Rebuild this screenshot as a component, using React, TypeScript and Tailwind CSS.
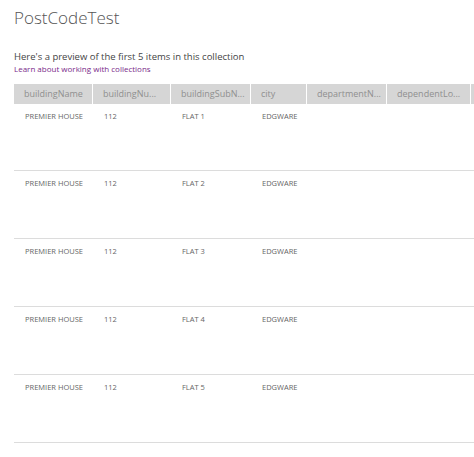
const columns = [
  { label: 'buildingName', width: 'w-[79px]' },
  { label: 'buildingNu...', width: 'w-[78px]' },
  { label: 'buildingSubN...', width: 'w-[80px]' },
  { label: 'city', width: 'w-[56px]' },
  { label: 'departmentN...', width: 'w-[80px]' },
  { label: 'dependentLo...', width: 'w-[84px]' },
  { label: '', width: 'w-[40px]' },
]

const rows = [1, 2, 3, 4, 5].map((n) => ['PREMIER HOUSE', '112', `FLAT ${n}`, 'EDGWARE', '', '', ''])

export default function App() {
  return (
    <div className="h-[457px] w-[474px] overflow-hidden bg-white pl-[14px] pt-[6px] font-['Open_Sans',sans-serif]">
      <h1 className="text-[17px] font-light leading-[24px] text-[#555]">PostCodeTest</h1>

      <div className="mt-[21px]">
        <p className="text-[9.5px] leading-[12px] text-[#444]">Here's a preview of the first 5 items in this collection</p>
        <a className="block text-[8px] leading-[11px] text-[#7a2a8a]">Learn about working with collections</a>
      </div>

      <div className="mt-[10px] w-[520px]">
        {/* header */}
        <div className="flex h-[20px] bg-[#d6d6d6]">
          {columns.map((c, i) => (
            <div
              key={i}
              className={`${c.width} flex shrink-0 items-center truncate border-r border-white pl-[10px] text-[9px] text-[#8f8f8f]`}
            >
              {c.label}
            </div>
          ))}
        </div>

        {rows.map((row, r) => (
          <div key={r} className={`flex border-b border-[#dcdcdc] ${r === 0 ? 'h-[67px]' : 'h-[68px]'}`}>
            {row.map((cell, i) => (
              <div
                key={i}
                className={`${columns[i].width} shrink-0 truncate pl-[11px] pt-[7px] text-[7.5px] leading-[10px] text-[#666]`}
              >
                {cell}
              </div>
            ))}
          </div>
        ))}
      </div>
    </div>
  )
}
